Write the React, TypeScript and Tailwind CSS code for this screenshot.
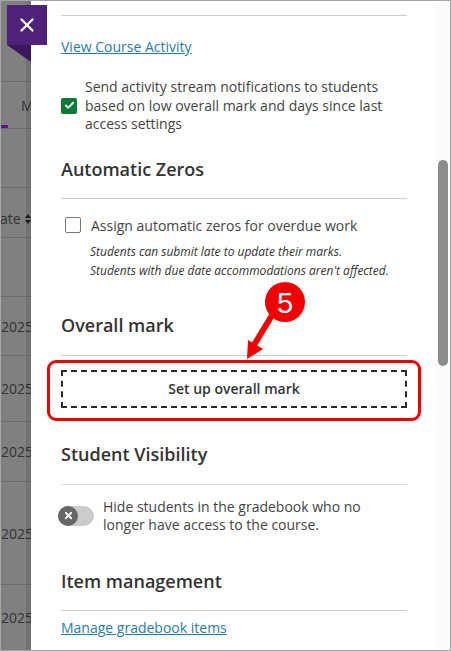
import React from 'react';
import { Check, X } from 'lucide-react';

const rows = [
  { h: 'h-[47px]', text: 'M', align: 'items-center justify-start pl-[20px]' },
  { h: 'h-[59px]', text: '', align: 'items-center justify-end' },
  { h: 'h-[50px]', text: 'ate', align: 'items-end justify-start pb-[8px] -ml-px' },
  { h: 'h-[59px]', text: '', align: 'items-center justify-end' },
  { h: 'h-[59px]', text: '/2025', align: 'items-center justify-end pr-0' },
  { h: 'h-[66px]', text: '/2025', align: 'items-center justify-end pr-0' },
  { h: 'h-[60px]', text: '/2025', align: 'items-center justify-end pr-0' },
  { h: 'h-[103px]', text: '/2025', align: 'items-center justify-end pr-0' },
  { h: 'h-[66px]', text: '/2025', align: 'items-center justify-end pr-0' },
];

const SectionTitle = ({ children }: { children: React.ReactNode }) => (
  <h2 className="text-[18px] leading-[24px] font-semibold text-[#333]">{children}</h2>
);

const Rule = ({ className }: { className: string }) => <div className={`h-px bg-[#cdcdcd] ${className}`} />;

const App = () => (
  <div className="relative flex h-[651px] w-[451px] overflow-hidden border border-[#a6a6a6] font-['Open_Sans',sans-serif]">
    {/* Page behind the panel */}
    <div className="w-[30px] shrink-0 overflow-hidden bg-[#808080] pt-[80px] text-[14px] text-[#333]">
      {rows.map((row, i) => (
        <div key={i} className={`${row.h} ${row.align} relative flex w-[30px] border-t border-[#6b6b6b] whitespace-nowrap`}>
          <span className={row.text === '/2025' ? '-mr-[2px]' : ''}>{row.text}</span>
          {i === 0 && <span className="absolute bottom-0 left-0 h-[3px] w-[7px] bg-[#5c1a7e]" />}
          {i === 2 && (
            <svg className="absolute -right-[1px] bottom-[13px]" width="6" height="10" viewBox="0 0 6 10">
              <path d="M3 0L6 4H0ZM3 10L0 6H6Z" fill="#222" />
            </svg>
          )}
        </div>
      ))}
    </div>
    <div className="absolute top-0 bottom-0 left-[25px] w-[5px] bg-black/10" />

    {/* Panel */}
    <div className="flex min-w-0 flex-1 bg-white">
      <div className="w-[405px] shrink-0 pl-[30px] pr-[29px] pt-[14px]">
        <Rule className="" />
        <a className="mt-[21px] block text-[14px] leading-[19px] text-[#2a7ba8] underline">View Course Activity</a>
        <div className="mt-[22px] flex items-center gap-[8px]">
          <span className="flex h-4 w-4 shrink-0 items-center justify-center rounded-[2px] bg-[#0b7a35]">
            <Check size={11} strokeWidth={4} className="text-white" />
          </span>
          <p className="text-[14px] leading-[18.5px] text-[#444]">
            Send activity stream notifications to students based on low overall mark and days since last access settings
          </p>
        </div>
        <div className="mt-[23px]">
          <SectionTitle>Automatic Zeros</SectionTitle>
        </div>
        <Rule className="mt-[17px]" />
        <div className="mt-[17px] flex items-center gap-[10px] pl-[4px]">
          <span className="h-[16px] w-[16px] shrink-0 rounded-[2px] border border-[#767676] bg-white" />
          <span className="text-[14px] leading-[19px] text-[#444]">Assign automatic zeros for overdue work</span>
        </div>
        <p className="mt-[7px] pl-[29px] text-[12px] leading-[19px] text-[#333] italic">
          Students can submit late to update their marks.
          <br />
          Students with due date accommodations aren't affected.
        </p>
        <div className="mt-[33px]">
          <SectionTitle>Overall mark</SectionTitle>
        </div>
        <Rule className="mt-[18px]" />
        <button className="mt-[14px] block h-[38px] w-full border-2 border-dashed border-[#2b2b2b] text-[14px] font-semibold text-[#333]">
          Set up overall mark
        </button>
        <div className="mt-[34px]">
          <SectionTitle>Student Visibility</SectionTitle>
        </div>
        <Rule className="mt-[18px] bg-[#dedede]" />
        <div className="mt-[13px] flex items-center gap-[9px] pr-[30px]">
          <span className="relative -ml-[3px] h-[20px] w-[36px] shrink-0 rounded-full bg-[#cccccc]">
            <span className="absolute top-0 left-0 flex h-[20px] w-[20px] items-center justify-center rounded-full bg-[#666]">
              <X size={11} strokeWidth={4} className="text-white" />
            </span>
          </span>
          <p className="text-[14px] leading-[18px] text-[#444]">
            Hide students in the gradebook who no longer have access to the course.
          </p>
        </div>
        <div className="mt-[35px]">
          <SectionTitle>Item management</SectionTitle>
        </div>
        <Rule className="mt-[17px]" />
        <a className="mt-[7px] block text-[14px] leading-[19px] text-[#2a7ba8] underline">Manage gradebook items</a>
      </div>

      {/* Scrollbar */}
      <div className="flex-1 bg-[#fbfbfb] pt-[159px]">
        <div className="ml-[2px] h-[206px] w-[10px] rounded-full bg-[#8c8c8c]" />
      </div>
    </div>

    {/* Close ribbon */}
    <button className="absolute top-[4px] left-[6px] flex h-10 w-10 items-center justify-center bg-[#4f2277] text-white">
      <X size={22} strokeWidth={2.5} />
    </button>
    <svg className="absolute top-[44px] left-[6px]" width="24" height="18" viewBox="0 0 24 18">
      <path d="M0 0H24V17Z" fill="#3a1a5c" />
    </svg>

    {/* Annotation */}
    <div className="absolute top-[359px] left-[46px] h-[61px] w-[374px] rounded-[9px] border-[3px] border-[#f00000]" />
    <svg className="absolute top-[279px] left-[240px]" width="70" height="84" viewBox="0 0 70 84">
      <path d="M33 32 L13 65" stroke="#f00000" strokeWidth="6" />
      <path d="M6 79 L7 60 L22 69 Z" fill="#f00000" />
      <circle cx="44" cy="22" r="20" fill="#f00000" />
    </svg>
    <span className="absolute top-[282px] left-[264px] w-10 text-center font-['Liberation_Sans',sans-serif] text-[29px] leading-[40px] text-white">
      5
    </span>
  </div>
);

export default App;
